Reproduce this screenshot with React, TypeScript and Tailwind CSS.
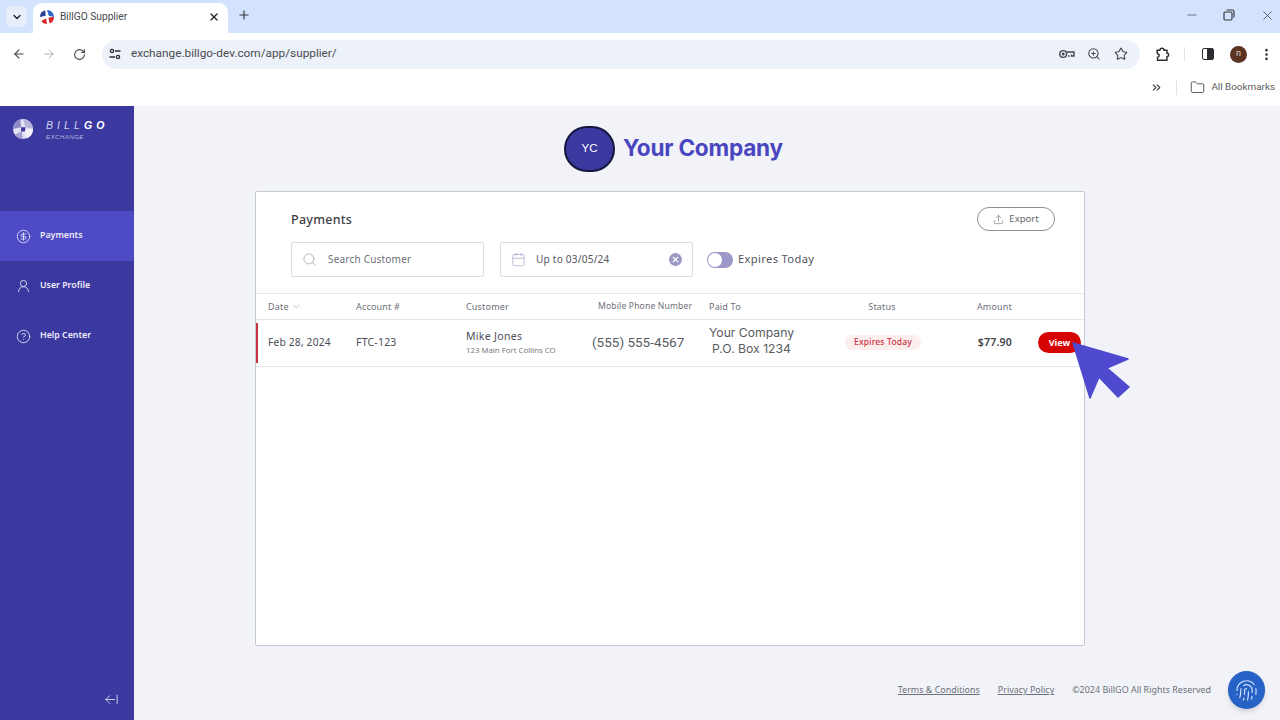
import React from 'react';
import {
  ArrowLeft, ArrowRight, RotateCw, X, Plus, ChevronDown, Minus, ZoomIn, Star,
  EllipsisVertical, ChevronsRight, Folder, CircleDollarSign, UserRound, CircleHelp, Search, Calendar,
  Upload, Fingerprint, ArrowLeftFromLine,
} from 'lucide-react';

const Globe: React.FC<{ size: number; light?: boolean }> = ({ size, light }) => (
  <svg width={size} height={size} viewBox="0 0 32 32">
    <circle cx="16" cy="16" r="16" fill={light ? '#e4e3f2' : '#fff'} />
    <path d="M16 0a16 16 0 0 1 16 16l-12 -3z" fill={light ? '#b9b6dd' : '#2f62c9'} />
    <path d="M0 16A16 16 0 0 1 12 .5L13 13z" fill={light ? '#8f8bc4' : '#2b3f92'} />
    <path d="M32 16a16 16 0 0 1-10 15l-3-14z" fill={light ? '#f3f2fa' : '#d9262e'} />
    <path d="M3 25a16 16 0 0 0 13 7l-2-13z" fill={light ? '#a5a1d3' : '#d9262e'} />
    <path d="M13 13l7 0 -1 7 -6 0z" fill={light ? '#3b38a0' : '#fff'} />
  </svg>
);

const Sidebar: React.FC = () => (
  <aside className="w-[134px] shrink-0 bg-[#3b38a0] flex flex-col text-white">
    <div className="h-[105px] pl-[13px] pt-[13px] flex items-start gap-[13px] shrink-0">
      <Globe size={20} light />
      <div className="pt-[1px] leading-none">
        <div className="text-[10.5px] italic tracking-[0.39em] text-[#d5d4ec] whitespace-nowrap font-['Liberation_Sans',sans-serif]">
          BILL<span className="font-bold text-white">GO</span>
        </div>
        <div className="text-[6.2px] italic tracking-[0.06em] text-[#b5b3de] mt-[3px] font-['Liberation_Sans',sans-serif]">EXCHANGE</div>
      </div>
    </div>
    <NavItem icon={<CircleDollarSign size={15} strokeWidth={1.3} />} label="Payments" active />
    <NavItem icon={<UserRound size={16} strokeWidth={1.3} />} label="User Profile" />
    <NavItem icon={<CircleHelp size={15} strokeWidth={1.3} />} label="Help Center" />
    <div className="mt-auto flex justify-end pr-[15px] pb-[13px] text-[#d5d4ec]">
      <ArrowLeftFromLine size={15} strokeWidth={1.5} />
    </div>
  </aside>
);

const NavItem: React.FC<{ icon: React.ReactNode; label: string; active?: boolean }> = ({ icon, label, active }) => (
  <div className={`h-[50px] flex items-center gap-[9px] pl-[16px] text-[8.8px] font-semibold text-[#eeedf9] ${active ? 'bg-[#4e4ac6]' : ''}`}>
    <span className="w-[15px] flex justify-center">{icon}</span>
    {label}
  </div>
);

const ChromeBar: React.FC = () => (
  <div className="shrink-0 font-['Roboto',sans-serif]">
    <div className="h-[33px] bg-[#d3e3fd] flex items-end pl-[6px] relative">
      <div className="w-[21px] h-[21px] mb-[6px] bg-[#e6eefc] rounded-[6px] flex items-center justify-center text-[#1f1f1f]">
        <ChevronDown size={12} strokeWidth={2.6} />
      </div>
      <div className="ml-[6px] w-[195px] h-[30px] pb-[3px] bg-white rounded-t-[9px] flex items-center pl-[7px] pr-[8px] gap-[6px]">
        <Globe size={14} />
        <span className="text-[10.2px] text-[#45474a] flex-1">BillGO Supplier</span>
        <X size={12} strokeWidth={2.4} className="text-[#1f1f1f]" />
      </div>
      <Plus size={14} strokeWidth={2} className="ml-[9px] mb-[11px] text-[#37393c]" />
      <div className="ml-auto h-[33px] pb-[3px] flex items-center pr-[5px] text-[#3a3c40]">
        <Minus size={14} strokeWidth={1.2} />
        <svg className="ml-[24px]" width="12" height="12" viewBox="0 0 12 12" fill="none" stroke="currentColor" strokeWidth="1.2">
          <rect x="1" y="3" width="8" height="8" rx="1.2" />
          <path d="M3.5 1h6a1.5 1.5 0 0 1 1.5 1.5v6" />
        </svg>
        <X className="ml-[25px]" size={15} strokeWidth={1.2} />
      </div>
    </div>
    <div className="h-[42px] bg-white flex items-center pl-[12px] pr-[6px] text-[#45474a]">
      <ArrowLeft size={14} strokeWidth={2} />
      <ArrowRight size={14} strokeWidth={1.6} className="ml-[16px] text-[#a9abae]" />
      <RotateCw size={13} strokeWidth={2} className="ml-[17px]" />
      <div className="ml-[16px] w-[1040px] h-[29px] bg-[#edf1f9] rounded-full flex items-center pl-[7px] pr-[12px]">
        <svg width="12" height="12" viewBox="0 0 12 12" fill="none" stroke="#2b2d30" strokeWidth="1.3">
          <circle cx="3" cy="3" r="1.6" />
          <path d="M6 3h5.5M.5 9H6" />
          <circle cx="9" cy="9" r="1.6" />
        </svg>
        <span className="ml-[10px] text-[11.8px] text-[#4a4c50] flex-1">exchange.billgo-dev.com/app/supplier/</span>
        <svg width="16" height="10" viewBox="0 0 16 10" fill="none" stroke="currentColor" strokeWidth="1.4">
          <circle cx="4.2" cy="5" r="3.4" />
          <circle cx="4.2" cy="5" r="0.8" />
          <path d="M7.6 3H15v4h-2.5V5.6M10.5 7H9" />
        </svg>
        <ZoomIn size={14} strokeWidth={1.8} className="ml-[12px]" />
        <Star size={14} strokeWidth={1.9} className="ml-[13px]" />
      </div>
      <svg className="ml-[15px]" width="15" height="15" viewBox="0 0 15 15" fill="none" stroke="#2b2d30" strokeWidth="1.5" strokeLinejoin="round">
        <path d="M2 4h3a2 2 0 0 1 4 0h3v3a1.6 1.6 0 0 1 0 3.4V14H2.5v-3a1.7 1.7 0 0 0 0-3.4z" transform="translate(0 -.8)" />
      </svg>
      <div className="ml-[14px] w-px h-[15px] bg-[#dfe3ea]" />
      <div className="ml-[17px] w-[12px] h-[12px] border-[1.5px] border-[#2b2d30] rounded-[2px] flex justify-end">
        <div className="w-[6px] h-full bg-[#2b2d30]" />
      </div>
      <div className="ml-[16px] w-[17px] h-[17px] rounded-full bg-[#5b3322] text-[#e6d6c8] text-[9px] flex items-center justify-center">n</div>
      <EllipsisVertical size={15} strokeWidth={2.2} className="ml-[12px] text-[#2b2d30]" />
    </div>
    <div className="h-[31px] pb-[6px] bg-white flex items-center justify-end pr-[5px]">
      <ChevronsRight size={13} strokeWidth={2} className="text-[#3a3c40]" />
      <div className="ml-[13px] w-px h-[15px] bg-[#dfe3ea]" />
      <Folder size={15} strokeWidth={1.4} className="ml-[13px] text-[#45474a]" />
      <span className="ml-[6px] text-[9.9px] text-[#5a5c60]">All Bookmarks</span>
    </div>
  </div>
);

const Th: React.FC<{ className: string; children: React.ReactNode }> = ({ className, children }) => (
  <div className={`text-[9px] tracking-[0.02em] text-[#6d7079] ${className}`}>{children}</div>
);

const PaymentsCard: React.FC = () => (
  <section className="ml-[121px] mt-[19px] w-[830px] h-[455px] bg-white border-[1.5px] border-[#c6c8cf] rounded-[2px] shrink-0 text-[#4b4d55]">
    <div className="h-[100.5px] pl-[35px] pr-[29px] pt-[16px]">
      <div className="flex items-center justify-between h-[24px]">
        <h2 className="text-[12.5px] font-medium tracking-[0.02em] text-[#3f4149]">Payments</h2>
        <button className="w-[78px] h-[24px] -mt-[2px] border border-[#8d8f96] rounded-full flex items-center justify-center gap-[5px] text-[9.5px] text-[#63656d]">
          <Upload size={11} strokeWidth={1.3} />
          Export
        </button>
      </div>
      <div className="flex items-center mt-[10px]">
        <div className="w-[193px] h-[35px] border border-[#dcdde3] rounded-[2px] flex items-center pl-[10px]">
          <Search size={15} strokeWidth={1} className="text-[#8f9199]" />
          <span className="ml-[11px] text-[10px] tracking-[0.02em] text-[#6d7079]">Search Customer</span>
        </div>
        <div className="ml-[16px] w-[193px] h-[35px] border border-[#dcdde3] rounded-[2px] flex items-center pl-[10px] pr-[10px]">
          <Calendar size={15} strokeWidth={1} className="text-[#9c99c6]" />
          <span className="ml-[10px] text-[10.1px] tracking-[0.02em] text-[#55575f] flex-1">Up to 03/05/24</span>
          <span className="w-[13px] h-[13px] rounded-full bg-[#9b98c4] flex items-center justify-center text-white">
            <X size={9} strokeWidth={3} />
          </span>
        </div>
        <div className="ml-[14px] w-[26px] h-[16px] rounded-full bg-[#9b98c9] p-[1px] flex">
          <div className="w-[14px] h-[14px] rounded-full bg-white" />
        </div>
        <span className="ml-[5px] text-[11.2px] tracking-[0.03em] text-[#55575f]">Expires Today</span>
      </div>
    </div>
    <div className="h-[27px] pt-[1px] border-t border-b border-[#e6e7eb] flex items-center">
      <Th className="ml-[12px] w-[88px] flex items-center gap-[2px]">Date <ChevronDown size={11} strokeWidth={1} /></Th>
      <Th className="w-[110px]">Account #</Th>
      <Th className="w-[132px]">Customer</Th>
      <Th className="w-[111px] !text-[8.55px] whitespace-nowrap">Mobile Phone Number</Th>
      <Th className="w-[133px]">Paid To</Th>
      <Th className="w-[80px] text-center">Status</Th>
      <Th className="w-[90px] text-right">Amount</Th>
    </div>
    <div className="h-[47px] border-b border-[#e6e7eb] flex items-center relative">
      <div className="w-[2px] h-[40px] bg-[#c8303f] shrink-0" />
      <div className="ml-[10px] mt-[1px] w-[88px] text-[10.2px] tracking-[0.02em]">Feb 28, 2024</div>
      <div className="mt-[1px] w-[110px] text-[10.5px] tracking-[0.02em]">FTC-123</div>
      <div className="w-[126px]">
        <div className="text-[10.5px] tracking-[0.03em] leading-[14px]">Mike Jones</div>
        <div className="text-[7.8px] text-[#777981] leading-[14px]">123 Main Fort Collins CO</div>
      </div>
      <div className="w-[117px] text-[13.5px] font-['Roboto',sans-serif] text-[#595b62]">(555) 555-4567</div>
      <div className="w-[136px] pb-[4px] text-[12.2px] font-['Inter',sans-serif] leading-[15.5px] text-[#595b62]">
        <div>Your Company</div>
        <div className="pl-[3px]">P.O. Box 1234</div>
      </div>
      <div className="w-[76px] h-[15px] bg-[#fdeeee] rounded-full flex items-center justify-center text-[8.5px] font-medium text-[#c8303f] tracking-[0.02em]">
        Expires Today
      </div>
      <div className="w-[91px] text-right text-[10.5px] font-semibold tracking-[0.02em] text-[#3f4149]">$77.90</div>
      <button className="ml-[26px] w-[43px] h-[21px] rounded-full bg-[#d60404] text-white text-[9px] font-bold">View</button>
    </div>
  </section>
);

const Footer: React.FC = () => (
  <footer className="mt-auto h-[60px] flex items-center justify-end pr-[15px] text-[8.95px] text-[#6d7079]">
    <a className="underline">Terms &amp; Conditions</a>
    <a className="underline ml-[18px]">Privacy Policy</a>
    <span className="ml-[18px]">©2024 BillGO All Rights Reserved</span>
    <div className="ml-[17px] w-[37px] h-[38px] rounded-full bg-[#2763c7] shadow-md flex items-center justify-center text-[#cfe0fb]">
      <Fingerprint size={23} strokeWidth={1.2} />
    </div>
  </footer>
);

const App: React.FC = () => (
  <div className="w-[1280px] h-[720px] overflow-hidden flex flex-col relative font-['Noto_Sans',sans-serif]">
    <ChromeBar />
    <div className="flex-1 flex min-h-0">
      <Sidebar />
      <main className="flex-1 bg-[#f1f3f8] flex flex-col min-w-0">
        <div className="ml-[430px] mt-[20px] flex items-center h-[46px] shrink-0">
          <div className="w-[51px] h-[46px] rounded-full bg-[#3b38a0] border-2 border-[#14163a] flex items-center justify-center text-white text-[11.5px] font-['Liberation_Sans',sans-serif]">
            YC
          </div>
          <h1 className="ml-[8px] pb-[3px] text-[22.6px] font-bold text-[#4a46c0] font-['Inter',sans-serif] tracking-[-0.01em]">Your Company</h1>
        </div>
        <PaymentsCard />
        <Footer />
      </main>
    </div>
    <svg className="absolute left-[1072px] top-[341px]" width="59" height="58" viewBox="0 0 59 58">
      <path d="M1 2 L56 18 L35 27 L57 46 L46 56 L27 36 L18 57 Z" fill="#4f49cf" stroke="#4f49cf" strokeWidth="1.5" strokeLinejoin="round" />
    </svg>
  </div>
);

export default App;
